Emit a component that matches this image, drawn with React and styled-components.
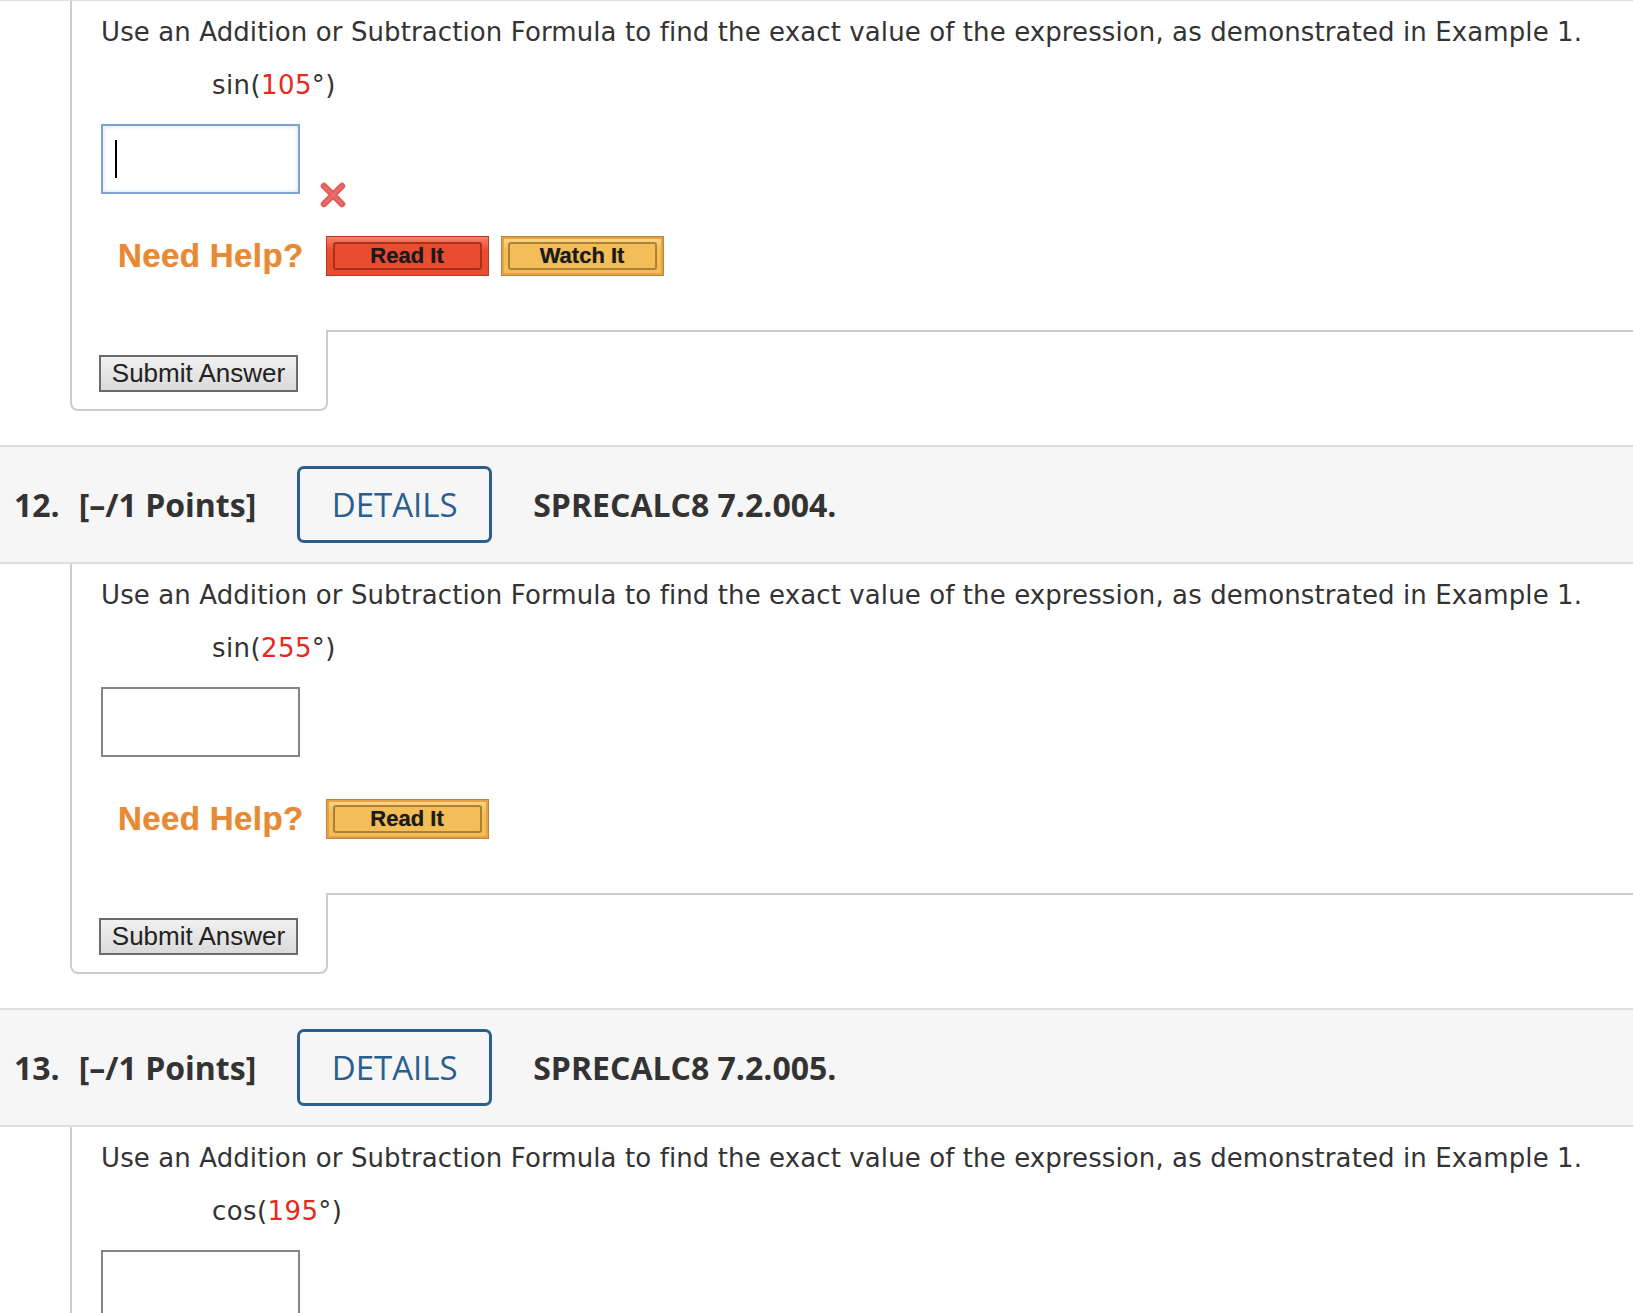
import React from 'react'
import styled, { createGlobalStyle } from 'styled-components'

const GlobalStyle = createGlobalStyle`
  html, body {
    margin: 0;
    padding: 0;
    background: #fff;
  }
  body {
    font-family: "DejaVu Sans", Verdana, sans-serif;
    color: #333;
    overflow: hidden;
  }
`

const Page = styled.div`
  width: 1633px;
`

const TopEdge = styled.div`
  border-bottom: 1px solid #dedede;
`

const Header = styled.div`
  display: flex;
  align-items: center;
  height: 115px;
  padding-left: 14px;
  background: #f6f6f6;
  border-top: 2px solid #dedede;
  border-bottom: 2px solid #dedede;
  font-family: "Open Sans", sans-serif;
  font-size: 32px;
  color: #333;
`

const Num = styled.span`
  font-weight: 700;
`

const Points = styled.span`
  font-weight: 700;
  margin-left: 19px;
`

const DetailsButton = styled.button`
  box-sizing: border-box;
  width: 195px;
  height: 77px;
  margin-left: 41px;
  border: 3px solid #2b5f90;
  border-radius: 7px;
  background: transparent;
  color: #2b5f90;
  font-family: "Open Sans", sans-serif;
  font-size: 33px;
  font-weight: 400;
  padding: 0;
`

const Code = styled.span`
  font-weight: 700;
  margin-left: 41px;
`

const Block = styled.section`
  margin-bottom: 34px;
`

const Card = styled.div`
  margin-left: 70px;
`

const Body = styled.div`
  border-left: 2px solid #cdcdcd;
  padding: 13px 0 54px 29px;
`

const Prompt = styled.div`
  font-size: 26px;
  line-height: 36px;
  letter-spacing: 0.1px;
`

const Expr = styled.div`
  margin: 17px 0 0 111px;
  font-size: 26px;
  line-height: 36px;
  letter-spacing: 0.4px;
`

const Red = styled.span`
  color: #e8291d;
`

const AnswerRow = styled.div`
  display: flex;
  align-items: flex-end;
  margin-top: 21px;
`

const AnswerBox = styled.div`
  box-sizing: border-box;
  width: 199px;
  height: 70px;
  display: flex;
  align-items: center;
  padding-left: 12px;
  background: #fff;
  border: 2px solid ${p => (p.$focused ? '#7fa2d2' : '#858585')};
  box-shadow: ${p => (p.$focused ? 'inset 0 0 4px rgba(110,160,230,0.35)' : 'none')};
`

const Caret = styled.span`
  width: 2px;
  height: 38px;
  background: #000;
`

const XMark = styled.svg`
  width: 26px;
  height: 26px;
  margin: 0 0 -14px 20px;
`

const HelpRow = styled.div`
  display: flex;
  align-items: center;
  height: 40px;
  margin: 42px 0 0 17px;
`

const NeedHelp = styled.span`
  font-family: "Liberation Sans", Arial, sans-serif;
  font-weight: 700;
  font-size: 33px;
  letter-spacing: 0.4px;
  color: #e78a36;
  text-shadow: 0 0 1px rgba(231, 138, 54, 0.7);
  margin-right: 22px;
`

const skins = {
  red: { edge: '#b83a22', fill: '#e94c2f', top: '#f3836a', inner: 'rgba(120, 25, 10, 0.55)' },
  yellow: { edge: '#b9853f', fill: '#f3bd57', top: '#f9d98f', inner: 'rgba(130, 85, 30, 0.6)', ring: '#eaa045' }
}

const HelpButton = styled.button`
  box-sizing: border-box;
  width: 163px;
  height: 40px;
  margin-right: 12px;
  padding: 5px 6px;
  border: 1px solid ${p => skins[p.$skin].edge};
  background: ${p => `linear-gradient(${skins[p.$skin].top} 0%, ${skins[p.$skin].fill} 35%, ${skins[p.$skin].fill} 100%)`};
  box-shadow: ${p => (skins[p.$skin].ring ? `inset 0 0 0 2px ${skins[p.$skin].ring}` : 'none')};
  display: flex;
`

const HelpLabel = styled.span`
  flex: 1;
  display: flex;
  align-items: center;
  justify-content: center;
  border: 2px solid ${p => skins[p.$skin].inner};
  border-radius: 3px;
  background: ${p => skins[p.$skin].fill};
  font-family: "Liberation Sans", Arial, sans-serif;
  font-weight: 700;
  font-size: 22px;
  color: #1a1a1a;
  text-shadow: 0 0 1px rgba(0, 0, 0, 0.4);
`

const BottomRow = styled.div`
  display: flex;
`

const SubmitTab = styled.div`
  box-sizing: border-box;
  width: 258px;
  padding: 25px 0 17px 27px;
  border: 2px solid #cdcdcd;
  border-top: none;
  border-radius: 0 0 8px 8px;
`

const Filler = styled.div`
  flex: 1;
  align-self: flex-start;
  border-top: 2px solid #cdcdcd;
`

const SubmitButton = styled.button`
  box-sizing: border-box;
  width: 199px;
  height: 37px;
  padding: 0;
  border: 2px solid #6b6b6b;
  background: linear-gradient(#f1f1f1, #dadada);
  font-family: "Liberation Sans", Arial, sans-serif;
  font-size: 26px;
  color: #222;
`

const Cross = () => (
  <XMark viewBox="0 0 26 26">
    <path d="M4 4 L22 22 M22 4 L4 22" stroke="#e45b5b" strokeWidth="6.5" strokeLinecap="round" />
    <path d="M4 4 L22 22 M22 4 L4 22" stroke="#ef8585" strokeWidth="2" strokeLinecap="round" opacity="0.5" />
  </XMark>
)

const questions = [
  { no: null, fn: 'sin', deg: '105', focused: true, wrong: true, help: ['red:Read It', 'yellow:Watch It'] },
  { no: 12, code: 'SPRECALC8 7.2.004.', fn: 'sin', deg: '255', help: ['yellow:Read It'] },
  { no: 13, code: 'SPRECALC8 7.2.005.', fn: 'cos', deg: '195', help: ['yellow:Read It'] }
]

const Question = ({ q }) => (
  <Block>
    {q.no ? (
      <Header>
        <Num>{q.no}.</Num>
        <Points>[–/1 Points]</Points>
        <DetailsButton>DETAILS</DetailsButton>
        <Code>{q.code}</Code>
      </Header>
    ) : (
      <TopEdge />
    )}
    <Card>
      <Body>
        <Prompt>Use an Addition or Subtraction Formula to find the exact value of the expression, as demonstrated in Example 1.</Prompt>
        <Expr>
          {q.fn}(<Red>{q.deg}</Red>°)
        </Expr>
        <AnswerRow>
          <AnswerBox $focused={q.focused}>{q.focused && <Caret />}</AnswerBox>
          {q.wrong && <Cross />}
        </AnswerRow>
        <HelpRow>
          <NeedHelp>Need Help?</NeedHelp>
          {q.help.map(h => {
            const [skin, label] = h.split(':')
            return (
              <HelpButton key={label} $skin={skin}>
                <HelpLabel $skin={skin}>{label}</HelpLabel>
              </HelpButton>
            )
          })}
        </HelpRow>
      </Body>
      <BottomRow>
        <SubmitTab>
          <SubmitButton>Submit Answer</SubmitButton>
        </SubmitTab>
        <Filler />
      </BottomRow>
    </Card>
  </Block>
)

export default function App() {
  return (
    <Page>
      <GlobalStyle />
      {questions.map((q, i) => (
        <Question key={i} q={q} />
      ))}
    </Page>
  )
}
